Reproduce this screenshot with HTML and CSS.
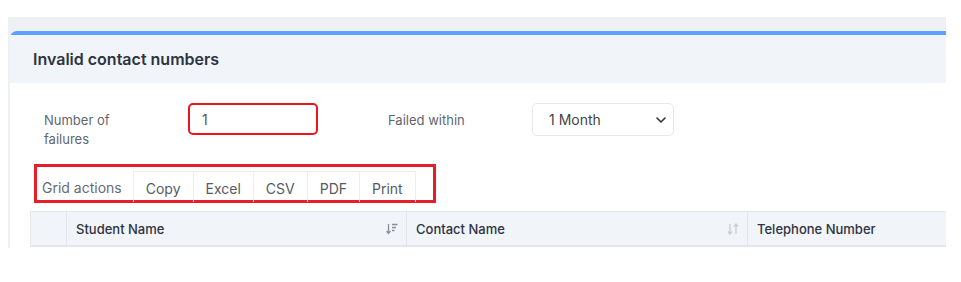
FILE: index.html
```html
<!DOCTYPE html>
<html lang="en">
<head>
  <meta charset="UTF-8" />
  <title>Invalid contact numbers</title>
  <link rel="stylesheet" href="styles.css">
</head>
<body>
  <div class="page">
    <div class="card">
      <!-- Card Header -->
      <div class="card-header">Invalid contact numbers</div>

      <!-- Card Body -->
      <div class="card-body">
        <div class="filter-row">
          <label class="filter-label" for="failures">Number of failures</label>
          <input class="filter-input invalid" id="failures" type="text" value="1" />

          <label class="filter-label wide" for="within">Failed within</label>
          <div class="filter-select" id="within">
            <span>1 Month</span>
            <svg class="chevron" width="10" height="6" viewBox="0 0 10 6">
              <path d="M1 1l4 4 4-4" fill="none" stroke="#333" stroke-width="1.6" stroke-linecap="round" stroke-linejoin="round"/>
            </svg>
          </div>
        </div>

        <div class="grid-toolbar">
          <span class="toolbar-label">Grid actions</span>
          <div class="btn-group">
            <span class="btn">Copy</span>
            <span class="btn">Excel</span>
            <span class="btn">CSV</span>
            <span class="btn">PDF</span>
            <span class="btn">Print</span>
          </div>
        </div>

        <div class="grid">
          <div class="grid-head">
            <div class="col col-check"></div>
            <div class="col col-name">
              <span>Student Name</span>
              <svg class="sort-icon" width="12" height="12" viewBox="0 0 12 12">
                <path d="M2.5 1v9M0.6 8l1.9 2.5L4.4 8" fill="none" stroke="#8a8f98" stroke-width="1.3"/>
                <path d="M6 1.5h5.5M6 4.5h4M6 7.5h2.5" stroke="#8a8f98" stroke-width="1.3"/>
              </svg>
            </div>
            <div class="col col-name">
              <span>Contact Name</span>
              <svg class="sort-icon" width="12" height="12" viewBox="0 0 12 12">
                <path d="M3 1v9.5M1 8.5l2 2.5 2-2.5" fill="none" stroke="#c9ccd2" stroke-width="1.3"/>
                <path d="M9 11V1.5M7 3.5l2-2.5 2 2.5" fill="none" stroke="#c9ccd2" stroke-width="1.3"/>
              </svg>
            </div>
            <div class="col col-phone">Telephone Number</div>
          </div>
        </div>
      </div>
    </div>
  </div>
</body>
</html>
```

FILE: styles.css
```css
:root {
  --page-bg: #eff0f4;
  --head-bg: #f1f4f9;
  --accent: #5aa3fc;
  --text: #2d3340;
  --subtext: #5f6670;
  --line: #e3e6eb;
  --alert: #e61e2a;
}

html, body {
  margin: 0;
  padding: 0;
  background: #fff;
}

body {
  font-family: Inter, 'Noto Sans', sans-serif;
  color: var(--text);
}

.page {
  width: 938px;
  height: 231px;
  margin: 17px 0 0 8px;
  background: var(--page-bg);
  overflow: hidden;
  padding-top: 14px;
  box-sizing: border-box;
}

.card {
  width: 1000px;
  margin-left: 2px;
  background: #fff;
  border-top: 4px solid var(--accent);
  border-radius: 7px 7px 0 0;
  height: 300px;
}

.card-header {
  height: 48px;
  display: flex;
  align-items: center;
  padding-left: 23px;
  background: var(--head-bg);
  font-size: 16px;
  font-weight: 600;
  color: #2d3340;
}

.card-body {
  padding: 20px 0 0 20px;
}

.filter-row {
  display: flex;
  align-items: flex-start;
  padding-left: 14px;
}

.filter-label {
  width: 100px;
  margin-right: 44px;
  padding-top: 8px;
  font-size: 13px;
  line-height: 19px;
  color: var(--subtext);
}

.filter-label.wide {
  width: 120px;
  margin-left: 70px;
  margin-right: 24px;
}

.filter-input {
  width: 130px;
  height: 32px;
  box-sizing: border-box;
  padding: 0 12px;
  border: 1px solid #e5e7eb;
  border-radius: 5px;
  font-family: inherit;
  font-size: 14px;
  color: #555;
  outline: none;
}

.filter-input.invalid {
  border: 2px solid #f0131e;
}

.filter-select {
  width: 142px;
  height: 33px;
  box-sizing: border-box;
  display: flex;
  align-items: center;
  justify-content: space-between;
  padding: 0 7px 0 16px;
  border: 1px solid #e6e8ec;
  border-radius: 5px;
  font-size: 14px;
  color: #444;
}

.grid-toolbar {
  display: inline-flex;
  align-items: flex-start;
  margin: 15px 0 0 4px;
  padding: 4px 17px 0 5px;
  height: 39px;
  box-sizing: border-box;
  border: 3px solid var(--alert);
}

.toolbar-label {
  font-size: 14px;
  line-height: 34px;
  color: #666b73;
  margin-right: 12px;
}

.btn-group {
  display: flex;
  height: 31px;
}

.btn {
  display: flex;
  align-items: center;
  padding: 2px 12px 0;
  font-size: 14px;
  color: #555b63;
  border: 1px solid #eceef1;
  border-bottom: none;
  margin-left: -1px;
}

.grid {
  margin-top: 8px;
  border: 1px solid var(--line);
  border-right: none;
}

.grid-head {
  display: flex;
  height: 33px;
  background: var(--head-bg);
  border-bottom: 1px solid var(--line);
  font-size: 13px;
  font-weight: 500;
  color: #2d3340;
}

.col {
  flex-shrink: 0;
  display: flex;
  align-items: center;
  justify-content: space-between;
  box-sizing: border-box;
  border-right: 1px solid var(--line);
  padding: 0 8px 0 9px;
}

.col-check {
  width: 36px;
}

.col-name {
  width: 340px;
}

.col-name + .col-name {
  width: 341px;
}

.col-phone {
  width: 300px;
  border-right: none;
}
```
